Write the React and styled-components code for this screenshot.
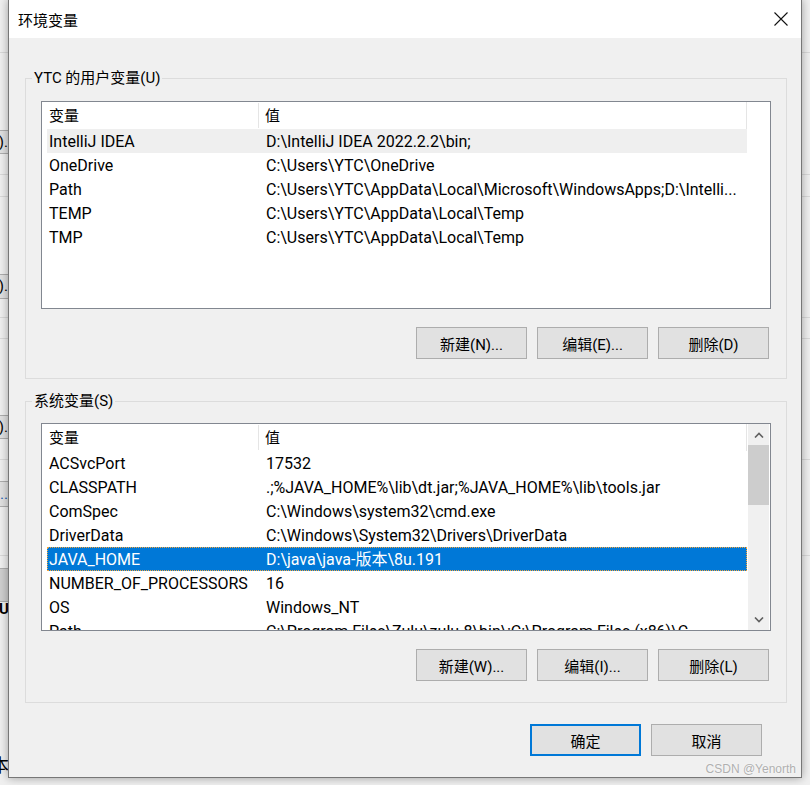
import React from 'react';
import styled, { createGlobalStyle } from 'styled-components';

const GlobalStyle = createGlobalStyle`
  html, body {
    margin: 0;
    padding: 0;
  }
  body {
    background: #f0f0f0;
    font-family: Roboto, "Noto Sans CJK SC", sans-serif;
    color: #000;
  }
`;

const Page = styled.div`
  position: relative;
  width: 810px;
  height: 785px;
  overflow: hidden;
  background: #f0f0f0;
`;

// window underneath the dialog, only a sliver shows on the left
const BackWindow = styled.div`
  position: absolute;
  inset: 0;
  display: flex;
  flex-direction: column;
  background: #f0f0f0;
  font-size: 15px;
`;

const BackLine = styled.div`
  height: 1px;
  background: #d9d9d9;
  margin-top: ${(p) => p.$gap}px;
`;

const BackButton = styled.div`
  margin-top: ${(p) => p.$gap}px;
  height: ${(p) => p.$h}px;
  width: 8px;
  box-sizing: border-box;
  background: ${(p) => p.$bg || '#e1e1e1'};
  border-top: 1px solid #adadad;
  border-bottom: 1px solid #adadad;
  display: flex;
  align-items: center;
  justify-content: flex-end;
  overflow: hidden;
  white-space: nowrap;
  line-height: 1;
  color: ${(p) => p.$color || '#000'};
`;

const BackGlyph = styled.div`
  margin-top: ${(p) => p.$gap}px;
  width: 9px;
  overflow: hidden;
  display: flex;
  justify-content: flex-end;
  white-space: nowrap;
  font-size: ${(p) => p.$size || 15}px;
  font-weight: ${(p) => p.$weight || 400};
  line-height: 20px;
`;

const Dialog = styled.div`
  position: absolute;
  left: 8px;
  top: -1px;
  width: 794px;
  height: 779px;
  box-sizing: border-box;
  border: 1px solid #777;
  box-shadow: 0 0 9px rgba(0, 0, 0, 0.35);
  display: flex;
  flex-direction: column;
  background: #f0f0f0;
`;

const TitleBar = styled.div`
  height: 38px;
  flex-shrink: 0;
  background: #fff;
  display: flex;
  align-items: center;
  justify-content: space-between;
  padding-left: 9px;
`;

const Title = styled.span`
  font-size: 15px;
  font-family: "Noto Sans CJK SC", sans-serif;
`;

const CloseButton = styled.div`
  width: 40px;
  height: 38px;
  display: flex;
  align-items: center;
  justify-content: center;
`;

const Body = styled.div`
  flex: 1;
  display: flex;
  flex-direction: column;
  padding: 0 14px 0 16px;
`;

const GroupBox = styled.div`
  position: relative;
  margin-top: ${(p) => p.$mt}px;
  border: 1px solid #dcdcdc;
  padding: ${(p) => p.$pt}px 15px ${(p) => p.$pb}px 15px;
  display: flex;
  flex-direction: column;
`;

const Legend = styled.span`
  position: absolute;
  top: -11px;
  left: 6px;
  padding: 0 2px;
  background: #f0f0f0;
  font-size: 15px;
  line-height: 20px;
`;

const List = styled.div`
  height: 208px;
  box-sizing: border-box;
  border: 1px solid #828790;
  background: #fff;
  display: flex;
  overflow: hidden;
`;

const ListMain = styled.div`
  flex: 1;
  overflow: hidden;
`;

const Grid = styled.div`
  display: grid;
  grid-template-columns: 212px 488px;
  margin-left: 5px;
  width: 700px;
  font-size: 16px;
`;

const HeaderRow = styled(Grid)`
  height: 27px;
  border-right: 1px solid #e5e5e5;
  box-sizing: border-box;
`;

const HeaderCell = styled.div`
  line-height: 25px;
  font-size: 15px;
  padding-top: 1px;
  box-sizing: border-box;
  padding-left: ${(p) => (p.$first ? 2 : 6)}px;
  border-right: ${(p) => (p.$first ? '1px solid #e5e5e5' : 'none')};
  margin-top: 1px;
  margin-bottom: 1px;
  overflow: hidden;
`;

const Row = styled(Grid)`
  height: 24px;
  background: ${(p) => (p.$selected ? '#0078d7' : p.$hover ? '#efefef' : 'transparent')};
  color: ${(p) => (p.$selected ? '#fff' : '#000')};
  outline: ${(p) => (p.$selected ? '1px dotted #f7a53a' : 'none')};
  outline-offset: -1px;
`;

const Cell = styled.div`
  height: 24px;
  box-sizing: border-box;
  line-height: 24px;
  padding-top: 1px;
  padding-left: ${(p) => (p.$first ? 2 : 7)}px;
  white-space: nowrap;
  overflow: hidden;
`;

const ScrollBar = styled.div`
  width: 21px;
  flex-shrink: 0;
  background: #f0f0f0;
  display: flex;
  flex-direction: column;
  margin-right: 1px;
`;

const ScrollArrow = styled.div`
  height: 21px;
  display: flex;
  align-items: center;
  justify-content: center;
  flex-shrink: 0;
`;

const ScrollThumb = styled.div`
  height: 60px;
  background: #cdcdcd;
  flex-shrink: 0;
`;

const ScrollTrack = styled.div`
  flex: 1;
`;

const ButtonRow = styled.div`
  display: flex;
  justify-content: flex-end;
  gap: 10px;
  margin-top: ${(p) => p.$mt}px;
  margin-right: ${(p) => p.$mr}px;
`;

const Button = styled.button`
  width: 111px;
  height: 32px;
  box-sizing: border-box;
  background: #e1e1e1;
  border: ${(p) => (p.$default ? '2px solid #0078d7' : '1px solid #adadad')};
  font-family: Roboto, "Noto Sans CJK SC", sans-serif;
  font-size: 15px;
  color: #000;
  padding: 0;
  cursor: default;
`;

const Watermark = styled.div`
  position: absolute;
  right: 14px;
  top: 762px;
  font-family: "Liberation Sans", sans-serif;
  font-size: 12px;
  color: #b0b0b0;
  text-shadow: 0 0 2px #fff;
`;

const userVars = [
  ['IntelliJ IDEA', 'D:\\IntelliJ IDEA 2022.2.2\\bin;'],
  ['OneDrive', 'C:\\Users\\YTC\\OneDrive'],
  ['Path', 'C:\\Users\\YTC\\AppData\\Local\\Microsoft\\WindowsApps;D:\\Intelli...'],
  ['TEMP', 'C:\\Users\\YTC\\AppData\\Local\\Temp'],
  ['TMP', 'C:\\Users\\YTC\\AppData\\Local\\Temp'],
];

const systemVars = [
  ['ACSvcPort', '17532'],
  ['CLASSPATH', '.;%JAVA_HOME%\\lib\\dt.jar;%JAVA_HOME%\\lib\\tools.jar'],
  ['ComSpec', 'C:\\Windows\\system32\\cmd.exe'],
  ['DriverData', 'C:\\Windows\\System32\\Drivers\\DriverData'],
  ['JAVA_HOME', 'D:\\java\\java-版本\\8u.191'],
  ['NUMBER_OF_PROCESSORS', '16'],
  ['OS', 'Windows_NT'],
  ['Path', 'C:\\Program Files\\Zulu\\zulu-8\\bin\\;C:\\Program Files (x86)\\C...'],
];

const Chevron = ({ up }) => (
  <svg width="10" height="6" viewBox="0 0 10 6">
    <path
      d={up ? 'M1 5.5 L5 1.5 L9 5.5' : 'M1 0.5 L5 4.5 L9 0.5'}
      fill="none"
      stroke="#606060"
      strokeWidth="1.6"
    />
  </svg>
);

const VarList = ({ rows, hoverIndex, selectedIndex, scroll }) => (
  <List>
    <ListMain>
      <HeaderRow>
        <HeaderCell $first>变量</HeaderCell>
        <HeaderCell>值</HeaderCell>
      </HeaderRow>
      {rows.map(([name, value], i) => (
        <Row key={name + i} $hover={i === hoverIndex} $selected={i === selectedIndex}>
          <Cell $first>{name}</Cell>
          <Cell>{value}</Cell>
        </Row>
      ))}
    </ListMain>
    {scroll && (
      <ScrollBar>
        <ScrollArrow>
          <Chevron up />
        </ScrollArrow>
        <ScrollThumb />
        <ScrollTrack />
        <ScrollArrow>
          <Chevron />
        </ScrollArrow>
      </ScrollBar>
    )}
  </List>
);

const App = () => {
  return (
    <Page>
      <GlobalStyle />
      <BackWindow>
        <BackLine $gap={52} />
        <BackButton $gap={77} $h={24}>).</BackButton>
        <BackLine $gap={20} />
        <BackLine $gap={21} />
        <BackButton $gap={77} $h={25}>).</BackButton>
        <BackLine $gap={18} />
        <BackLine $gap={20} />
        <BackButton $gap={76} $h={24}>).</BackButton>
        <BackLine $gap={20} />
        <BackButton $gap={21} $h={26} $color="#1a5fb4">...</BackButton>
        <BackLine $gap={48} />
        <BackButton $gap={12} $h={34} $bg="#cfcfcf" />
        <BackGlyph $gap={-3} $weight={700}>U</BackGlyph>
        <BackGlyph $gap={137} $size={18}>本</BackGlyph>
      </BackWindow>

      <Dialog>
        <TitleBar>
          <Title>环境变量</Title>
          <CloseButton>
            <svg width="14" height="14" viewBox="0 0 14 14">
              <path d="M0.5 0.5 L13.5 13.5 M13.5 0.5 L0.5 13.5" stroke="#111" strokeWidth="1.1" />
            </svg>
          </CloseButton>
        </TitleBar>
        <Body>
          <GroupBox $mt={40} $pt={22} $pb={19}>
            <Legend>YTC 的用户变量(U)</Legend>
            <VarList rows={userVars} hoverIndex={0} />
            <ButtonRow $mt={18} $mr={2}>
              <Button>新建(N)...</Button>
              <Button>编辑(E)...</Button>
              <Button>删除(D)</Button>
            </ButtonRow>
          </GroupBox>

          <GroupBox $mt={22} $pt={21} $pb={21}>
            <Legend>系统变量(S)</Legend>
            <VarList rows={systemVars} selectedIndex={4} scroll />
            <ButtonRow $mt={18} $mr={2}>
              <Button>新建(W)...</Button>
              <Button>编辑(I)...</Button>
              <Button>删除(L)</Button>
            </ButtonRow>
          </GroupBox>

          <ButtonRow $mt={21} $mr={25}>
            <Button $default>确定</Button>
            <Button>取消</Button>
          </ButtonRow>
        </Body>
      </Dialog>
      <Watermark>CSDN @Yenorth</Watermark>
    </Page>
  );
};

export default App;
